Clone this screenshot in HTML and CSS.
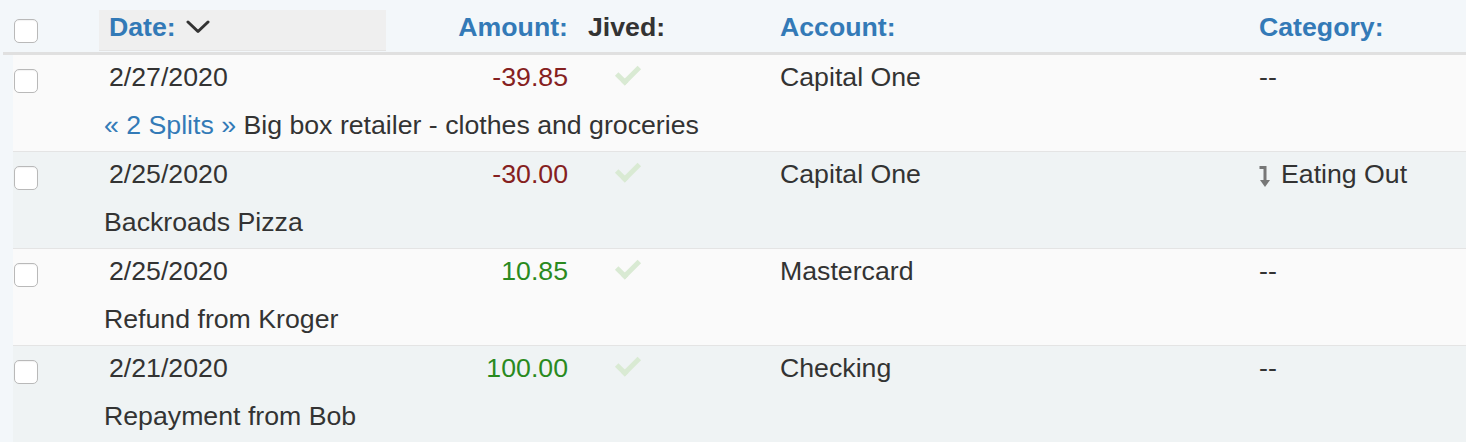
FILE: index.html
```html
<!DOCTYPE html>
<html lang="en">
<head>
    <meta charset="UTF-8">
    <meta name="viewport" content="width=device-width, initial-scale=1.0">
    <title>Transactions</title>
    <link rel="stylesheet" href="styles.css">
</head>
<body>
    <div class="ledger">
        <div class="ledger-head">
            <div class="cell-check"><span class="checkbox"></span></div>
            <div class="head-date">
                <a href="#">Date:</a>
                <svg class="chevron" width="24" height="14" viewBox="0 0 24 14">
                    <polyline points="2,2 12,11.5 22,2" fill="none" stroke="#333" stroke-width="3" stroke-linejoin="round" stroke-linecap="round"/>
                </svg>
            </div>
            <div class="head-amount"><a href="#">Amount:</a></div>
            <div class="head-jived"><span>Jived:</span></div>
            <div class="head-text"><a href="#">Account:</a></div>
            <div class="head-text"><a href="#">Category:</a></div>
        </div>

        <div class="ledger-rows">
            <div class="ledger-row">
                <div class="cell-check"><span class="checkbox"></span></div>
                <div class="cell-date">2/27/2020</div>
                <div class="cell-amount negative">-39.85</div>
                <div class="cell-jived"><span class="check"></span></div>
                <div class="cell-text">Capital One</div>
                <div class="cell-text">--</div>
                <div class="cell-desc"><a href="#">« 2 Splits »</a> Big box retailer - clothes and groceries</div>
            </div>

            <div class="ledger-row">
                <div class="cell-check"><span class="checkbox"></span></div>
                <div class="cell-date">2/25/2020</div>
                <div class="cell-amount negative">-30.00</div>
                <div class="cell-jived"><span class="check"></span></div>
                <div class="cell-text">Capital One</div>
                <div class="cell-text"><svg class="level-down" width="11" height="23" viewBox="0 0 11 23">
                        <path d="M0.5 2.5 H6 V16" fill="none" stroke="#777" stroke-width="3"/>
                        <polygon points="1,15 11,15 6,22" fill="#777"/>
                    </svg>Eating Out</div>
                <div class="cell-desc">Backroads Pizza</div>
            </div>

            <div class="ledger-row">
                <div class="cell-check"><span class="checkbox"></span></div>
                <div class="cell-date">2/25/2020</div>
                <div class="cell-amount positive">10.85</div>
                <div class="cell-jived"><span class="check"></span></div>
                <div class="cell-text">Mastercard</div>
                <div class="cell-text">--</div>
                <div class="cell-desc">Refund from Kroger</div>
            </div>

            <div class="ledger-row">
                <div class="cell-check"><span class="checkbox"></span></div>
                <div class="cell-date">2/21/2020</div>
                <div class="cell-amount positive">100.00</div>
                <div class="cell-jived"><span class="check"></span></div>
                <div class="cell-text">Checking</div>
                <div class="cell-text">--</div>
                <div class="cell-desc">Repayment from Bob</div>
            </div>
        </div>
    </div>
</body>
</html>
```

FILE: styles.css
```css
body {
    margin: 0;
    font-family: "Liberation Sans", Arial, Helvetica, sans-serif;
    font-size: 26.7px;
    color: #333;
    background-color: #f3f7fa;
}

a {
    color: #337ab7;
    text-decoration: none;
}

.ledger-head,
.ledger-row {
    display: grid;
    grid-template-columns: 86px 287px 182px 212px 479px 1fr;
}

.ledger-head {
    margin-left: 3px;
    padding: 10px 0 1px 10px;
    border-bottom: 3px solid #e0e0e0;
    font-weight: bold;
    line-height: 35px;
    align-items: start;
}

.ledger-head .cell-check {
    margin-top: 9px;
}

.head-date {
    display: flex;
    align-items: center;
    gap: 10px;
    padding: 0 10px 5px;
    background-color: #efefef;
    border-bottom: 1px solid #e4e4e4;
}

.chevron {
    margin-top: -2px;
}

.head-amount {
    text-align: right;
}

.head-jived {
    padding-left: 20px;
}

.head-jived span {
    display: inline-block;
    width: 77px;
}

.ledger-rows {
    margin-left: 13px;
}

.ledger-row {
    grid-template-rows: 40px 40px;
    row-gap: 8px;
    padding: 2px 0 6px;
    line-height: 40px;
    background-color: #fafafa;
    border-bottom: 1px solid #e4e4e4;
}

.ledger-row:nth-child(even) {
    background-color: #eff3f4;
}

.ledger-row:last-child {
    border-bottom: none;
}

.ledger-row .cell-check {
    margin-top: 12px;
}

.checkbox {
    display: block;
    width: 22px;
    height: 22px;
    margin-left: 1px;
    background-color: #fff;
    border: 1px solid #b9b9b9;
    border-radius: 5px;
    box-shadow: inset 0 1px 1px rgba(0,0,0,0.05);
}

.cell-date {
    padding-left: 10px;
}

.cell-amount {
    text-align: right;
}

.negative {
    color: #852020;
}

.positive {
    color: #2a8a1e;
}

.cell-jived {
    padding-left: 20px;
}

/* jived tick, drawn as a rotated corner */
.check {
    display: block;
    position: relative;
    width: 77px;
    height: 40px;
}

.check::after {
    content: "";
    position: absolute;
    left: 33px;
    top: 4px;
    width: 9px;
    height: 18px;
    border-right: 5px solid #d9ead3;
    border-bottom: 5px solid #d9ead3;
    transform: rotate(45deg);
}

.cell-text {
    white-space: nowrap;
}

.level-down {
    margin-right: 11px;
    vertical-align: -5px;
}

.cell-desc {
    grid-column: 2 / -1;
    padding-left: 5px;
}
```
